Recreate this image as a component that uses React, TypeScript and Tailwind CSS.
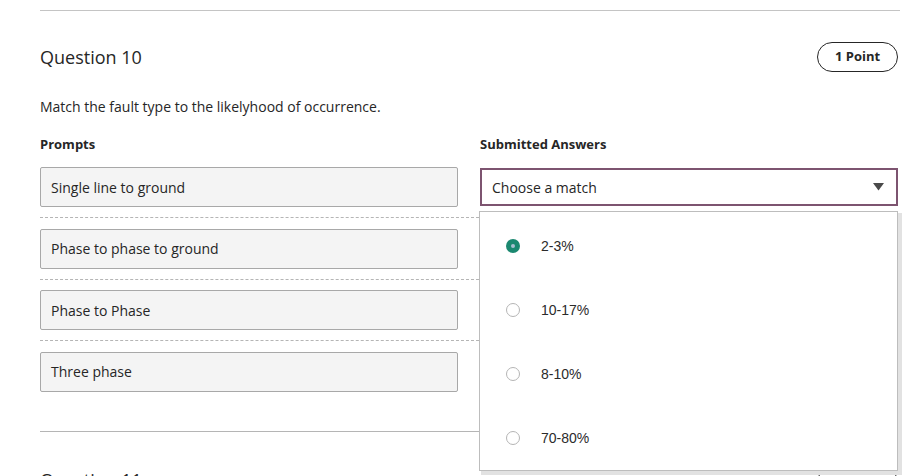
const prompts = ["Single line to ground", "Phase to phase to ground", "Phase to Phase", "Three phase"]
const options = ["2-3%", "10-17%", "8-10%", "70-80%"]

function Radio({ checked }: { checked?: boolean }) {
  if (checked) {
    return (
      <span className="flex h-[14px] w-[14px] items-center justify-center rounded-full bg-[#1b8870]">
        <span className="h-[4px] w-[4px] rounded-full bg-[#a9bfd0]" />
      </span>
    )
  }
  return <span className="h-[14px] w-[14px] rounded-full border border-[#b5b5b5] bg-white" />
}

function MatchSelect() {
  return (
    <div className="relative">
      <div className="flex h-[38px] items-center justify-between border-2 border-[#7d5470] bg-white pl-[10px] pr-[12px] text-[14px] text-[#262626]">
        <span>Choose a match</span>
        <svg width="11" height="8" viewBox="0 0 11 8">
          <path d="M0 0 H11 L5.5 7.5 Z" fill="#4a4a4a" />
        </svg>
      </div>
      {/* open menu */}
      <div className="absolute left-[-1px] top-[43px] z-10 w-[419px] border border-[#bdbdbd] bg-white pt-[2px] shadow-[3px_3px_0_1px_#e2e2e2]">
        {options.map((o, i) => (
          <div key={o} className="flex h-[64px] items-center gap-[21px] pl-[26px] font-['Liberation_Sans',Arial,sans-serif] text-[14px] text-[#2b2b2b]">
            <Radio checked={i === 0} />
            <span>{o}</span>
          </div>
        ))}
      </div>
    </div>
  )
}

export default function App() {
  return (
    <div className="min-h-[476px] overflow-hidden bg-white pl-[40px] font-['Open_Sans',sans-serif] text-[#262626]">
      <div className="w-[860px]">
        <div className="mt-[10px] h-px bg-[#c4c4c4]" />

        {/* Question header */}
        <div className="mt-[31px] flex h-[30px] items-center justify-between pr-[2px]">
          <h2 className="text-[18px] font-medium">Question 10</h2>
          <span className="flex h-[30px] w-[81px] items-center justify-center rounded-full border border-[#262626] text-[13px] font-bold">
            1 Point
          </span>
        </div>

        <p className="mt-[25px] text-[14px] leading-[20px]">Match the fault type to the likelyhood of occurrence.</p>

        <div className="mt-[18px] grid grid-cols-[418px_418px] gap-x-[22px] text-[13px] font-bold leading-[18px]">
          <div>Prompts</div>
          <div>Submitted Answers</div>
        </div>

        <div className="mt-[14px]">
          {prompts.map((p, i) => (
            <div key={p} className={i > 0 ? "border-t border-dashed border-[#b5b5b5] pt-[10.5px]" : ""}>
              <div className={i < prompts.length - 1 ? "mb-[10px] grid grid-cols-[418px_418px] gap-x-[22px]" : "grid grid-cols-[418px_418px] gap-x-[22px]"}>
                <div className="flex h-[40px] items-center rounded-[2px] border border-[#a8a8a8] bg-[#f4f4f4] px-[10px] text-[14px]">
                  {p}
                </div>
                <div className="pt-px">{i === 0 && <MatchSelect />}</div>
              </div>
            </div>
          ))}
        </div>

        <div className="mt-[39.5px] h-px bg-[#b5b5b5]" />

        <div className="mt-[35px] flex items-start justify-between pr-[2px]">
          <h2 className="text-[18px] font-medium">Question 11</h2>
          <span className="flex h-[30px] w-[81px] items-center justify-center rounded-full border border-[#262626] text-[13px] font-bold">
            1 Point
          </span>
        </div>
      </div>
    </div>
  )
}
